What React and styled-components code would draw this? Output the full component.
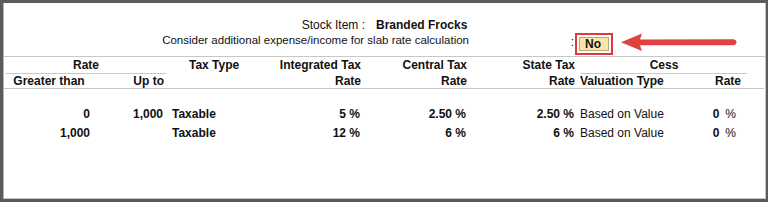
import React from "react";
import styled, { createGlobalStyle } from "styled-components";

const Global = createGlobalStyle`
  html, body { margin: 0; padding: 0; background: #fff; }
  body {
    font-family: "Liberation Sans", Arial, sans-serif;
    font-size: 12px;
    color: #111;
  }
`;

const Frame = styled.div`
  box-sizing: border-box;
  width: 768px;
  height: 202px;
  border: 3px solid #5b5b5b;
  border-right-width: 2px;
  box-shadow: inset 1px 0 0 #b5b5b5, inset -1px 0 0 #c4c4c4, inset 0 -1px 0 #c4c4c4;
  padding-top: 15px;
  overflow: hidden;
`;

const ItemRow = styled.div`
  display: grid;
  grid-template-columns: 362px 1fr;
  line-height: 15px;
`;

const Label = styled.span`
  text-align: right;
`;

const Value = styled.span`
  font-weight: bold;
  padding-left: 11px;
`;

const OptionRow = styled.div`
  display: grid;
  grid-template-columns: 466px 106px 38px auto;
  justify-content: start;
  align-items: start;
  height: 22px;
`;

const OptionLabel = styled.span`
  text-align: right;
  line-height: 15px;
  font-size: 11.5px;
`;

const Colon = styled.span`
  text-align: right;
  line-height: 15px;
  padding-top: 2px;
  padding-right: 1px;
`;

const Highlight = styled.div`
  box-sizing: border-box;
  width: 38px;
  height: 22px;
  border: 2px solid #e0393b;
  padding: 2px;
  display: flex;
`;

const Field = styled.div`
  flex: 1;
  background: #fbe6a6;
  border: 1px solid #b9a982;
  font-weight: bold;
  line-height: 12px;
  padding-left: 5px;
`;

const Arrow = styled.svg`
  display: block;
  margin-left: 7px;
  margin-top: -3px;
`;

const Table = styled.div`
  margin: 1px 1px 0 1px;
  border-top: 1px solid #c8c8c8;
`;

const Grid = styled.div`
  display: grid;
  grid-template-columns: 88px 73px 105px 92px 106px 108px 88px 82px;
  margin-left: 1px;
`;

const HeadTop = styled(Grid)`
  height: 17px;
  font-weight: bold;
  line-height: 15px;
`;

const HeadBottom = styled(Grid)`
  font-weight: bold;
  line-height: 14px;
`;

const HeadRule = styled.div`
  border-bottom: 1px solid #c8c8c8;
  margin-right: 1px;
`;

const Body = styled.div`
  padding-top: 16px;
`;

const Row = styled(Grid)`
  line-height: 19px;
  font-weight: bold;
`;

const Cell = styled.div`
  text-align: ${(p) => p.$align || "right"};
  padding-top: ${(p) => p.$pt || 0}px;
  padding-left: ${(p) => p.$pl || 0}px;
  padding-right: ${(p) => (p.$pr === undefined ? 2 : p.$pr)}px;
  font-weight: ${(p) => (p.$light ? "normal" : "inherit")};
  white-space: nowrap;
`;

const Group = styled(Cell)`
  grid-column: span 2;
  box-sizing: border-box;
  height: 17px;
  padding-top: 1px;
  border-bottom: 1px solid #c8c8c8;
  margin-left: ${(p) => p.$ml || 0}px;
`;

const Pct = styled.span`
  font-weight: normal;
  margin-left: 6px;
`;

const slabs = [
  { from: "0", to: "1,000", igst: "5 %", cgst: "2.50 %", sgst: "2.50 %" },
  { from: "1,000", to: "", igst: "12 %", cgst: "6 %", sgst: "6 %" },
];

export default function App() {
  return (
    <>
      <Global />
      <Frame>
        <ItemRow>
          <Label>Stock Item :</Label>
          <Value>Branded Frocks</Value>
        </ItemRow>
        <OptionRow>
          <OptionLabel>
            Consider additional expense/income for slab rate calculation
          </OptionLabel>
          <Colon>:</Colon>
          <Highlight>
            <Field>No</Field>
          </Highlight>
          <Arrow width="118" height="26" viewBox="0 0 118 26">
            <path
              d="M1 12.3 L22 3.5 L20 9.6 L113 9.2 Q116.5 9.6 116.5 12.3 Q116.5 15 113 15.2 L20 15.2 L22 21 Z"
              fill="#e1413f"
            />
          </Arrow>
        </OptionRow>

        <Table>
          <HeadTop>
            <Group $align="center" $pr={0} $ml={1}>
              Rate
            </Group>
            <Cell $align="left" $pl={23} $pt={1}>
              Tax Type
            </Cell>
            <Cell $pt={1}>Integrated Tax</Cell>
            <Cell $pt={1}>Central Tax</Cell>
            <Cell $pt={1}>State Tax</Cell>
            <Group $align="center" $pr={0} $ml={4}>
              Cess
            </Group>
          </HeadTop>
          <HeadRule>
            <HeadBottom>
              <Cell $align="center" $pr={0}>
                Greater than
              </Cell>
              <Cell>Up to</Cell>
              <Cell />
              <Cell>Rate</Cell>
              <Cell>Rate</Cell>
              <Cell>Rate</Cell>
              <Cell $align="left" $pl={3}>
                Valuation Type
              </Cell>
              <Cell $pr={6}>Rate</Cell>
            </HeadBottom>
          </HeadRule>
        </Table>

        <Body>
          {slabs.map((s, i) => (
            <Row key={i}>
              <Cell>{s.from}</Cell>
              <Cell>{s.to}</Cell>
              <Cell $align="left" $pl={7}>
                Taxable
              </Cell>
              <Cell>{s.igst}</Cell>
              <Cell>{s.cgst}</Cell>
              <Cell>{s.sgst}</Cell>
              <Cell $align="left" $pl={4} $light>
                Based on Value
              </Cell>
              <Cell $pr={10}>
                0<Pct>%</Pct>
              </Cell>
            </Row>
          ))}
        </Body>
      </Frame>
    </>
  );
}
